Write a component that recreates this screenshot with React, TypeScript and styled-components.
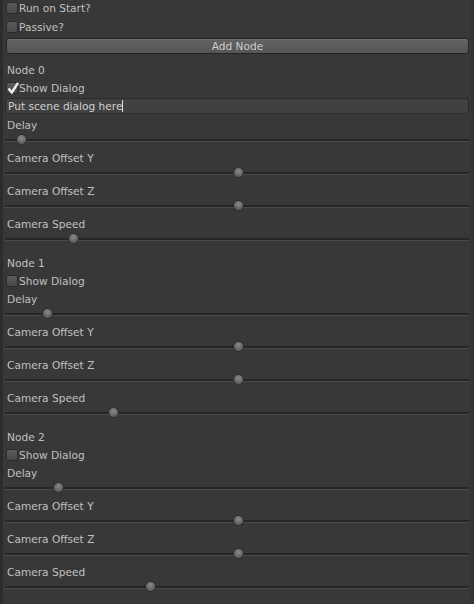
import React from 'react'
import styled, { createGlobalStyle } from 'styled-components'

const GlobalStyle = createGlobalStyle`
  html, body {
    margin: 0;
    padding: 0;
    background: #383838;
  }
  body {
    font-family: 'DejaVu Sans', 'Liberation Sans', sans-serif;
    font-size: 10.6px;
    color: #c0c0c0;
  }
`

const Inspector = styled.div`
  width: 474px;
  height: 604px;
  box-sizing: border-box;
  overflow: hidden;
  background: #383838;
  border-left: 3px solid #2c2c2c;
  border-right: 3px solid #333333;
  padding: 0 2px 0 2px;
  display: flex;
  flex-direction: column;
`

const ToggleRow = styled.label<{ $gap?: number }>`
  height: 16px;
  display: flex;
  align-items: center;
  gap: 1px;
  margin-bottom: ${({ $gap }) => $gap ?? 2}px;
  padding-left: 1px;
  white-space: nowrap;
`

const Box = styled.span`
  position: relative;
  width: 12px;
  height: 12px;
  box-sizing: border-box;
  border-radius: 2px;
  border: 1px solid #2b2b2b;
  background: linear-gradient(#5a5a5a, #4a4a4a);
  & > svg {
    position: absolute;
    left: -1px;
    top: -2px;
  }
`

const AddButton = styled.div`
  height: 16px;
  margin: 0 0 8px 1px;
  width: 463px;
  box-sizing: border-box;
  border-radius: 3px;
  border: 1px solid #262626;
  background: linear-gradient(#636363, #555555);
  box-shadow: inset 0 1px 0 #707070;
  color: #cccccc;
  display: flex;
  align-items: center;
  justify-content: center;
`

const Label = styled.div<{ $after?: number }>`
  height: 16px;
  line-height: 16px;
  padding-left: 2px;
  margin-bottom: ${({ $after }) => $after ?? 2}px;
  white-space: nowrap;
`

const TextField = styled.div`
  height: 16px;
  box-sizing: border-box;
  margin: 2px 0 3px 0;
  border: 1px solid #2a2a2a;
  border-radius: 2px;
  background: #414141;
  padding-left: 2px;
  display: flex;
  align-items: center;
  color: #d0d0d0;
`

const Caret = styled.span`
  display: inline-block;
  width: 1px;
  height: 12px;
  background: #e0e0e0;
`

const SliderTrack = styled.div<{ $after: number }>`
  position: relative;
  height: 14px;
  margin-bottom: ${({ $after }) => $after}px;
  &::before {
    content: '';
    position: absolute;
    left: 0;
    right: 0;
    top: 6px;
    height: 2px;
    background: #262626;
    border-bottom: 1px solid #4a4a4a;
  }
`

const Knob = styled.span`
  position: absolute;
  top: 1px;
  width: 11px;
  height: 11px;
  margin-left: -5px;
  border-radius: 50%;
  box-sizing: border-box;
  border: 1px solid #2e2e2e;
  background: radial-gradient(circle at 50% 35%, #8a8a8a, #5e5e5e 70%);
`

const NodeSpacer = styled.div`
  height: 9px;
`

type Slider = { name: string; knob: number }
type Node = { title: string; dialog: boolean; sliders: Slider[] }

const nodes: Node[] = [
  {
    title: 'Node 0',
    dialog: true,
    sliders: [
      { name: 'Delay', knob: 21 },
      { name: 'Camera Offset Y', knob: 238 },
      { name: 'Camera Offset Z', knob: 238 },
      { name: 'Camera Speed', knob: 73 },
    ],
  },
  {
    title: 'Node 1',
    dialog: false,
    sliders: [
      { name: 'Delay', knob: 47 },
      { name: 'Camera Offset Y', knob: 238 },
      { name: 'Camera Offset Z', knob: 238 },
      { name: 'Camera Speed', knob: 113 },
    ],
  },
  {
    title: 'Node 2',
    dialog: false,
    sliders: [
      { name: 'Delay', knob: 58 },
      { name: 'Camera Offset Y', knob: 238 },
      { name: 'Camera Offset Z', knob: 238 },
      { name: 'Camera Speed', knob: 150 },
    ],
  },
]

const Check = () => (
  <svg width="14" height="14" viewBox="0 0 14 14">
    <path d="M2.5 7.5 L5.8 11.5 L12 2" fill="none" stroke="#f0f0f0" strokeWidth="2.4" />
  </svg>
)

const Toggle = ({ text, on, gap }: { text: string; on?: boolean; gap?: number }) => (
  <ToggleRow $gap={gap}>
    <Box>{on && <Check />}</Box>
    <span>{text}</span>
  </ToggleRow>
)

const App = () => {
  return (
    <>
      <GlobalStyle />
      <Inspector>
        <Toggle text="Run on Start?" gap={3} />
        <Toggle text="Passive?" gap={3} />
        <AddButton>Add Node</AddButton>
        {nodes.map((node, n) => (
          <React.Fragment key={node.title}>
            {n > 0 && <NodeSpacer />}
            <Label>{node.title}</Label>
            <Toggle text="Show Dialog" on={node.dialog} gap={node.dialog ? 0 : 2} />
            {node.dialog && (
              <TextField>
                Put scene dialog here
                <Caret />
              </TextField>
            )}
            {node.sliders.map((s, i) => (
              <React.Fragment key={s.name}>
                <Label $after={0}>{s.name}</Label>
                <SliderTrack $after={i < node.sliders.length - 1 ? 3 : 0}>
                  <Knob style={{ left: s.knob - 5 }} />
                </SliderTrack>
              </React.Fragment>
            ))}
          </React.Fragment>
        ))}
      </Inspector>
    </>
  )
}

export default App
